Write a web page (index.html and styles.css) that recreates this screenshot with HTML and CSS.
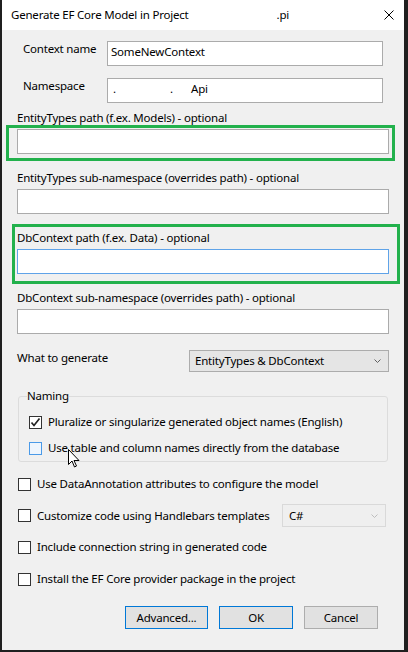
FILE: index.html
```html
<!DOCTYPE html>
<html>
<head>
<meta charset="utf-8">
<link rel="stylesheet" href="styles.css">
</head>
<body>
<div class="window">
  <div class="titlebar">
    <span class="title">Generate EF Core Model in Project<span class="redact"></span>.pi</span>
    <svg class="close" width="10" height="10" viewBox="0 0 10 10"><path d="M0.5 0.5 L9.5 9.5 M9.5 0.5 L0.5 9.5" stroke="#000" stroke-width="1" fill="none"/></svg>
  </div>
  <div class="content">
    <div class="field-row first">
      <span class="row-label">Context name</span>
      <div class="input">SomeNewContext</div>
    </div>
    <div class="field-row">
      <span class="row-label">Namespace</span>
      <div class="input"><span class="ns-a">.</span><span class="ns-b">.</span>Api</div>
    </div>

    <div class="stack first-stack">
      <div class="stack-label">EntityTypes path (f.ex. Models) - optional</div>
      <div class="input"></div>
    </div>
    <div class="stack">
      <div class="stack-label">EntityTypes sub-namespace (overrides path) - optional</div>
      <div class="input"></div>
    </div>
    <div class="stack">
      <div class="stack-label">DbContext path (f.ex. Data) - optional</div>
      <div class="input focused"></div>
    </div>
    <div class="stack">
      <div class="stack-label">DbContext sub-namespace (overrides path) - optional</div>
      <div class="input"></div>
    </div>

    <div class="gen-row">
      <span class="gen-label">What to generate</span>
      <div class="select">
        <span>EntityTypes &amp; DbContext</span>
        <svg class="chev" width="7" height="4" viewBox="0 0 7 4"><path d="M0.5 0.5 L3.5 3.5 L6.5 0.5" stroke="#606060" stroke-width="1" fill="none"/></svg>
      </div>
    </div>

    <fieldset class="naming">
      <legend>Naming</legend>
      <div class="check-row">
        <span class="box"><svg width="11" height="11" viewBox="0 0 11 11"><path d="M1.5 5.5 L4 8.5 L9.5 1.5" stroke="#222" stroke-width="1.7" fill="none"/></svg></span>
        <span>Pluralize or singularize generated object names (English)</span>
      </div>
      <div class="check-row second">
        <span class="box hover"></span>
        <span>Use table and column names directly from the database</span>
      </div>
    </fieldset>

    <div class="check-row outer cb3">
      <span class="box"></span>
      <span>Use DataAnnotation attributes to configure the model</span>
    </div>
    <div class="check-row outer cb4">
      <span class="box"></span>
      <span>Customize code using Handlebars templates</span>
      <div class="select disabled">
        <span>C#</span>
        <svg class="chev" width="7" height="4" viewBox="0 0 7 4"><path d="M0.5 0.5 L3.5 3.5 L6.5 0.5" stroke="#bdbdbd" stroke-width="1" fill="none"/></svg>
      </div>
    </div>
    <div class="check-row outer cb5">
      <span class="box"></span>
      <span>Include connection string in generated code</span>
    </div>
    <div class="check-row outer cb6">
      <span class="box"></span>
      <span>Install the EF Core provider package in the project</span>
    </div>

    <div class="buttons">
      <button class="btn default btn-adv">Advanced...</button>
      <button class="btn default">OK</button>
      <button class="btn">Cancel</button>
    </div>
  </div>

  <div class="highlight hl-1"></div>
  <div class="highlight hl-2"></div>
  <svg class="cursor" width="12" height="19" viewBox="0 0 12 19"><path d="M0.5 0.5 L0.5 15.5 L4 12 L6.5 18 L8.5 17 L6 11.5 L11 11.5 Z" fill="#fff" stroke="#000" stroke-width="1"/></svg>
</div>
</body>
</html>
```

FILE: styles.css
```css
* { box-sizing: border-box; }
html, body { margin: 0; padding: 0; }
body {
  width: 408px;
  height: 652px;
  overflow: hidden;
  background: #1e1e1e;
  font-family: "Noto Sans", "Liberation Sans", sans-serif;
  font-size: 11.5px;
  letter-spacing: -0.2px;
  color: #000;
}
.window {
  position: relative;
  width: 408px;
  height: 652px;
  background: #f0f0f0;
  border-left: 2px solid #1f1f1f;
  border-right: 4px solid #1f1f1f;
  border-bottom: 2px solid #1f1f1f;
}
.titlebar {
  height: 30px;
  background: #fff;
  display: flex;
  align-items: center;
  padding-left: 9px;
  padding-right: 10px;
}
.title { flex: 1; white-space: nowrap; line-height: 16px; }
.redact { display: inline-block; width: 88px; }
.close { display: block; }
.content { padding: 0 15px; }

.field-row {
  display: flex;
  align-items: flex-start;
  padding-left: 6px;
  padding-right: 6px;
  margin-top: 12px;
}
.field-row.first { margin-top: 11px; }
.row-label { width: 84px; line-height: 14px; padding-top: 1px; }
.input {
  height: 25px;
  background: #fff;
  border: 1px solid #ababab;
  padding: 2px 0 0 3px;
  line-height: 16px;
  white-space: nowrap;
}
.field-row .input { flex: 1; }
.input.focused { border-color: #5fa3e8; }
.ns-a { display: inline-block; width: 59px; padding-left: 2px; }
.ns-b { display: inline-block; width: 21px; }

.stack { margin-top: 16px; display: flex; flex-direction: column; }
.stack .input { flex: none; }
.stack.first-stack { margin-top: 7px; }
.stack-label { line-height: 16px; margin-bottom: 3px; }

.gen-row { display: flex; align-items: flex-start; margin-top: 16px; }
.gen-label { line-height: 16px; }
.select {
  margin-left: auto;
  width: 200px;
  height: 22px;
  background: #e5e5e5;
  border: 1px solid #acacac;
  display: flex;
  align-items: center;
  justify-content: space-between;
  padding: 0 7px 0 5px;
  line-height: 16px;
}
.select .chev { display: block; }
.select.disabled {
  width: 104px;
  height: 23px;
  background: #efefef;
  border-color: #d9d9d9;
  margin-right: 3px;
  padding-left: 6px;
}

.naming {
  margin: 16px 1px 0 1px;
  border: 1px solid #dcdcdc;
  border-radius: 3px;
  padding: 10px 0 5px 10px;
  min-width: 0;
}
.naming legend {
  padding: 0;
  margin-left: -2px;
  line-height: 16px;
}
.check-row {
  display: flex;
  align-items: center;
  height: 16px;
  line-height: 16px;
  white-space: nowrap;
}
.check-row.second { margin-top: 10px; }
.box {
  width: 13px;
  height: 13px;
  flex: none;
  border: 1px solid #333;
  background: #fff;
  margin-right: 6px;
  display: flex;
  align-items: center;
  justify-content: center;
}
.box.hover { border-color: #4a9ae8; background: #eef5fd; }
.check-row.outer { margin-left: 1px; }
.cb3 { margin-top: 14px; }
.cb4 { margin-top: 12px; height: 23px; }
.cb5 { margin-top: 12px; }
.cb6 { margin-top: 16px; }

.buttons {
  display: flex;
  justify-content: flex-end;
  gap: 11px;
  margin-top: 19px;
  padding-right: 11px;
}
.btn {
  width: 74px;
  height: 23px;
  background: #e1e1e1;
  border: 1px solid #adadad;
  font-family: inherit;
  font-size: 11.5px;
  letter-spacing: -0.2px;
  color: #000;
  padding: 0;
  line-height: 16px;
}
.btn.default { border-color: #0078d7; }
.btn-adv { width: 83px; }

.highlight {
  position: absolute;
  border: 3px solid #22b14c;
  pointer-events: none;
}
.hl-1 { left: 4px; top: 125px; width: 389px; height: 36px; }
.hl-2 { left: 10px; top: 224px; width: 388px; height: 60px; }
.cursor { position: absolute; left: 66px; top: 449px; }
```
